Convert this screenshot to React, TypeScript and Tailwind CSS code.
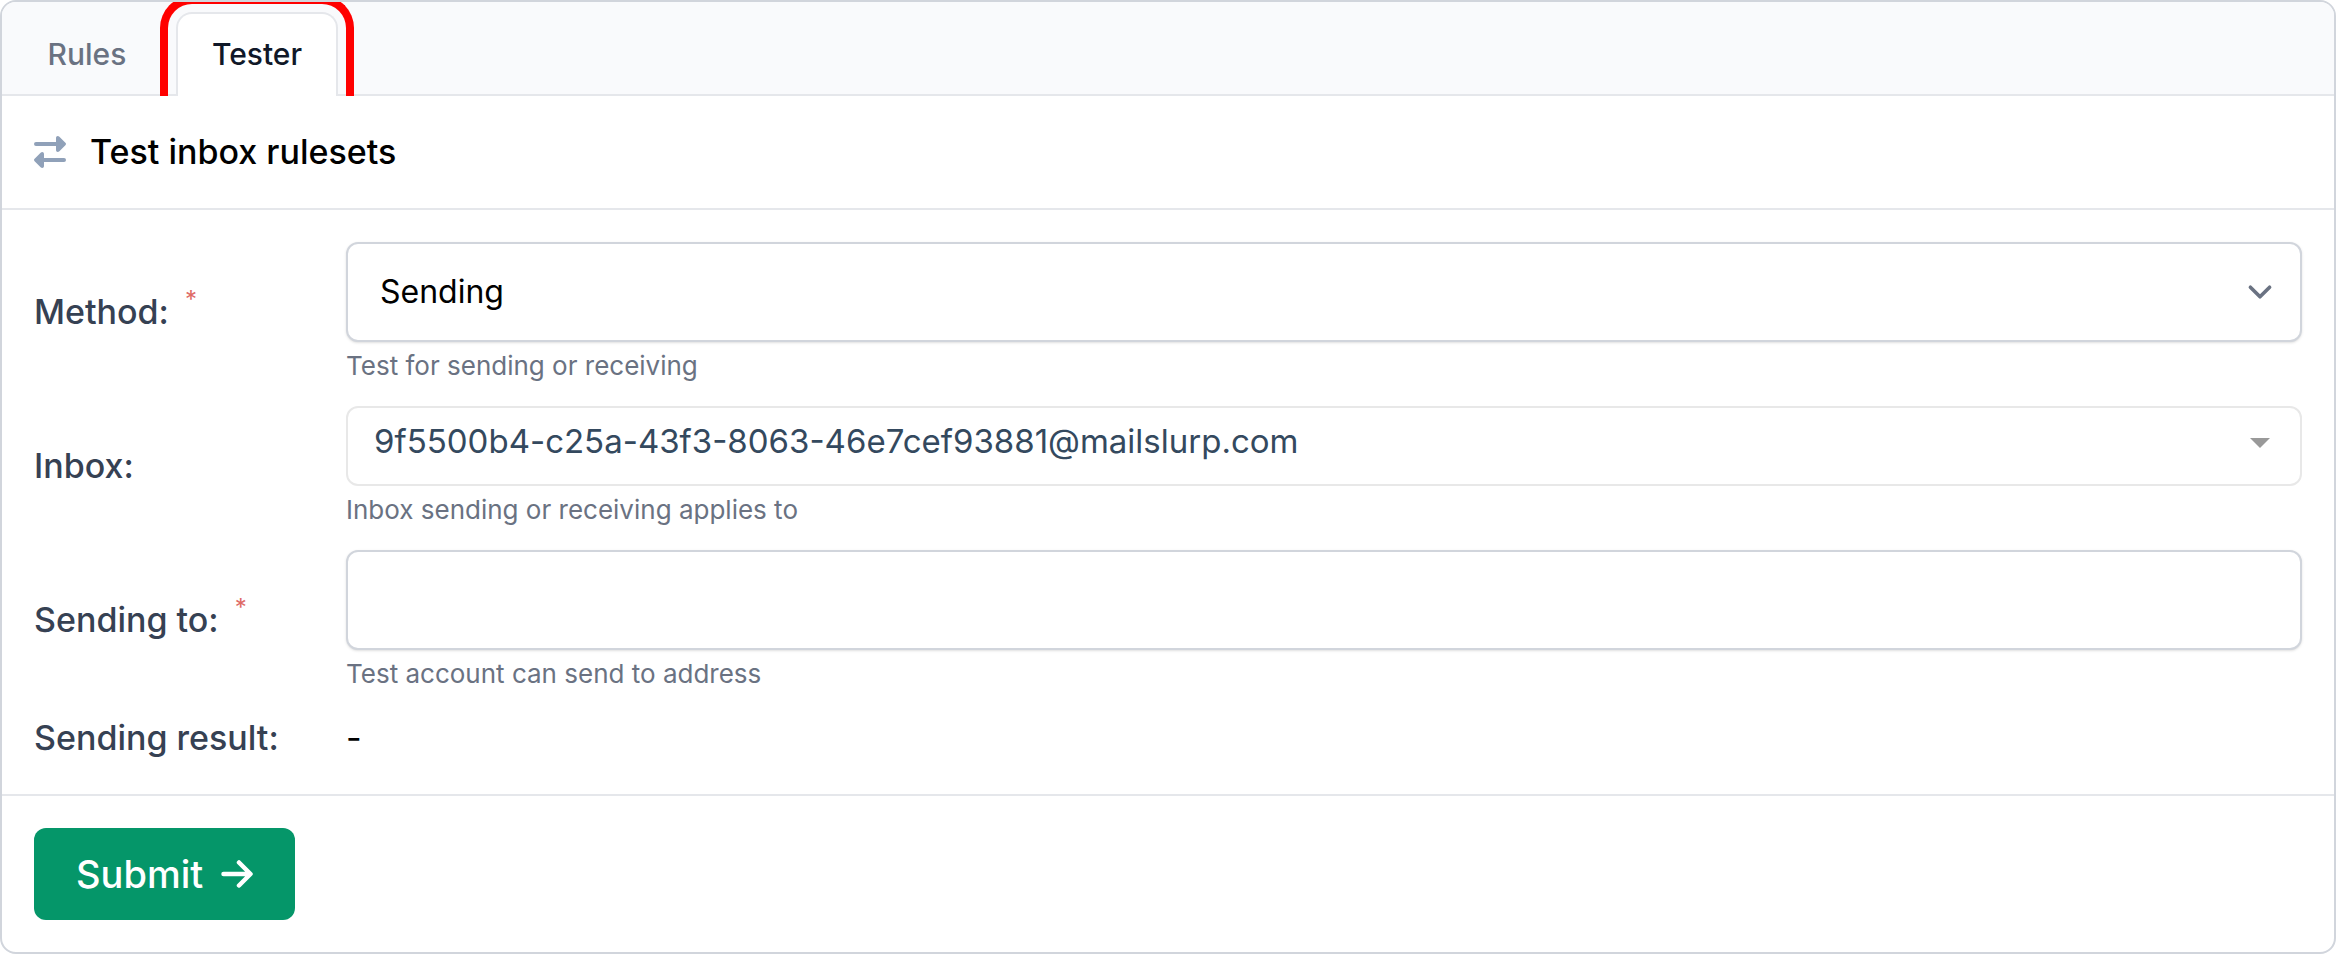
import { useState } from "react";
import type { ReactNode } from "react";

const LABEL = "flex text-[34px] leading-12 font-medium text-gray-700";
const CONTROL =
  "block w-full appearance-none bg-white border-2 rounded-xl outline-none";

interface FieldProps {
  id: string;
  label: string;
  help: string;
  required?: boolean;
  children: ReactNode;
}

function Field({ id, label, help, required, children }: FieldProps) {
  return (
    <div className="grid grid-cols-[312px_1fr] items-center">
      <label htmlFor={id} className={LABEL}>
        {label}
        {required && (
          <span className="ml-4 text-2xl leading-6 font-normal text-[#de6a66]">*</span>
        )}
      </label>
      <div>
        {children}
        <p className="mt-2 text-[26px] leading-8 text-gray-500">{help}</p>
      </div>
    </div>
  );
}

export default function App() {
  const [method, setMethod] = useState("Sending");
  const [address, setAddress] = useState("");

  return (
    <main className="overflow-hidden rounded-2xl border-2 border-gray-300 bg-white font-['Inter',sans-serif] text-black">
      {/* Tabs */}
      <nav className="flex h-[94px] items-end bg-[#f9fafc] shadow-[inset_0_-2px_0_#e5e7eb]">
        <button className="h-[84px] w-[158px] pl-3 text-[30px] font-medium text-gray-500">
          Rules
        </button>
        <div className="h-[100px] shrink-0 rounded-t-[32px] border-8 border-b-0 border-[#ff0000] px-2 pt-2">
          <button className="h-[84px] w-[162px] rounded-t-2xl border-2 border-b-0 border-gray-200 bg-white pb-0.5 text-[30px] font-medium text-gray-900">
            Tester
          </button>
        </div>
      </nav>

      {/* Title */}
      <header className="flex h-[114px] items-center gap-6 border-b-2 border-gray-200 px-8">
        <svg viewBox="0 0 32 32" className="size-8 text-slate-400" fill="currentColor">
          <path d="M2 6h20V2c0-2 2-2.600 3.400-1.200l6 6c.8.8.8 1.600 0 2.400l-6 6C24 16.600 22 16 22 14v-4H2a2 2 0 0 1 0-4z" />
          <path d="M30 22H10v-4c0-2-2-2.600-3.400-1.200l-6 6c-.8.8-.8 1.600 0 2.400l6 6C8 32.600 10 32 10 30v-4h20a2 2 0 0 0 0-4z" />
        </svg>
        <h1 className="text-[34px] leading-12 font-medium">Test inbox rulesets</h1>
      </header>

      <form onSubmit={(e) => e.preventDefault()}>
        <div className="flex flex-col gap-6 p-8">
          <Field id="method" label="Method:" help="Test for sending or receiving" required>
            <div className="relative">
              <select
                id="method"
                value={method}
                onChange={(e) => setMethod(e.target.value)}
                className={`${CONTROL} h-[100px] border-gray-300 px-8 text-[32px] shadow-sm`}
              >
                <option>Sending</option>
                <option>Receiving</option>
              </select>
              <svg
                viewBox="0 0 20 20"
                className="pointer-events-none absolute top-[26px] right-[18px] size-12 text-gray-500"
                fill="none"
                stroke="currentColor"
                strokeWidth="1.5"
                strokeLinecap="round"
                strokeLinejoin="round"
              >
                <path d="M6 8l4 4 4-4" />
              </svg>
            </div>
          </Field>

          <Field id="inbox" label="Inbox:" help="Inbox sending or receiving applies to">
            <div className="relative">
              <select
                id="inbox"
                className={`${CONTROL} h-20 border-[#e8e8e8] px-[26px] pb-2 text-[33px] text-[#34495e]`}
              >
                <option>9f5500b4-c25a-43f3-8063-46e7cef93881@mailslurp.com</option>
              </select>
              <svg
                viewBox="0 0 20 10"
                className="pointer-events-none absolute top-8 right-8 h-[10px] w-5 text-[#999999]"
                fill="currentColor"
              >
                <path d="M0 0h20L10 10z" />
              </svg>
            </div>
          </Field>

          <Field id="address" label="Sending to:" help="Test account can send to address" required>
            <input
              id="address"
              type="text"
              value={address}
              onChange={(e) => setAddress(e.target.value)}
              className={`${CONTROL} h-[100px] border-gray-300 px-8 text-[32px] shadow-sm`}
            />
          </Field>

          <div className="grid grid-cols-[312px_1fr] items-center">
            <span className={LABEL}>Sending result:</span>
            <output className="text-[34px] leading-12">-</output>
          </div>
        </div>

        {/* Footer */}
        <div className="border-t-2 border-gray-200 p-8">
          <button
            type="submit"
            className="flex h-[92px] items-center gap-[18px] rounded-xl bg-[#059669] px-[42px] text-[38px] font-medium text-white"
          >
            Submit
            <svg
              viewBox="0 0 32 32"
              className="size-8"
              fill="none"
              stroke="currentColor"
              strokeWidth="4.500"
              strokeLinecap="round"
              strokeLinejoin="round"
            >
              <path d="M2.500 16h26M18 4.500L29.500 16 18 27.500" />
            </svg>
          </button>
        </div>
      </form>
    </main>
  );
}
